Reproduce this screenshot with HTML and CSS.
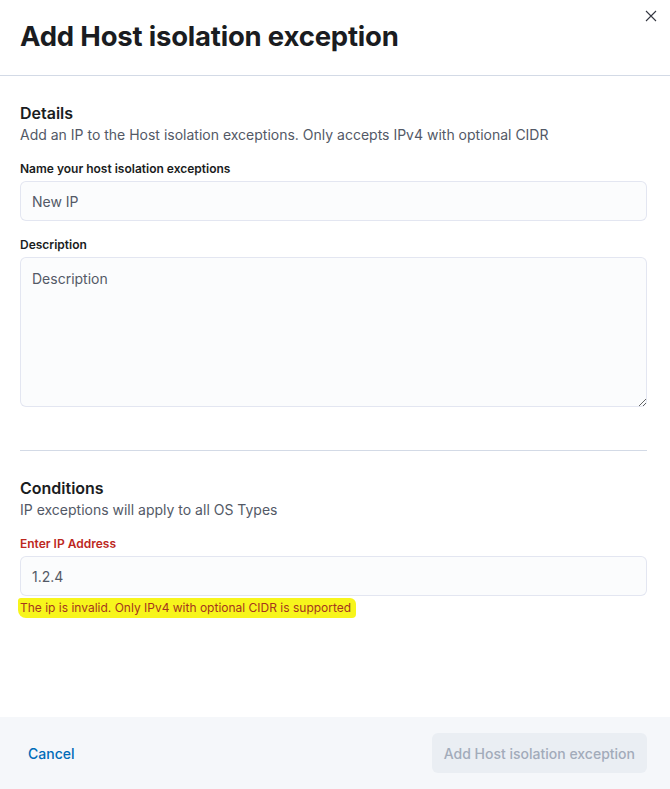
FILE: index.html
```html
<!DOCTYPE html>
<html>
<head>
<meta charset="utf-8">
<link rel="stylesheet" href="styles.css">
</head>
<body>
<div class="flyout">
  <button class="close" aria-label="Close">
    <svg width="12" height="12" viewBox="0 0 12 12"><path d="M1 1L11 11M11 1L1 11" stroke="#343741" stroke-width="1.1" fill="none"/></svg>
  </button>
  <header class="header">
    <h2 class="title">Add Host isolation exception</h2>
  </header>
  <main class="body">
    <section class="section">
      <h3 class="sec-title">Details</h3>
      <p class="sec-text">Add an IP to the Host isolation exceptions. Only accepts IPv4 with optional CIDR</p>
      <div class="field">
        <label class="label">Name your host isolation exceptions</label>
        <input class="input" type="text" value="New IP">
      </div>
      <div class="field">
        <label class="label">Description</label>
        <textarea class="textarea" placeholder="Description"></textarea>
      </div>
    </section>
    <hr class="rule">
    <section class="section">
      <h3 class="sec-title">Conditions</h3>
      <p class="sec-text">IP exceptions will apply to all OS Types</p>
      <div class="field">
        <label class="label label-err">Enter IP Address</label>
        <input class="input" type="text" value="1.2.4">
        <div class="error"><span class="hl">The ip is invalid. Only IPv4 with optional CIDR is supported</span></div>
      </div>
    </section>
  </main>
  <footer class="footer">
    <a class="cancel" href="#">Cancel</a>
    <button class="submit" disabled>Add Host isolation exception</button>
  </footer>
</div>
</body>
</html>
```
FILE: styles.css
```css
* { box-sizing: border-box; }
html, body { margin: 0; padding: 0; }
body {
  font-family: Inter, "Liberation Sans", sans-serif;
  color: #343741;
  background: #fff;
  width: 670px;
  height: 789px;
  overflow: hidden;
}
.flyout {
  position: relative;
  height: 789px;
  display: flex;
  flex-direction: column;
}
.close {
  position: absolute;
  top: 5px;
  right: 8px;
  width: 22px;
  height: 22px;
  border: 0;
  background: transparent;
  padding: 0;
  display: flex;
  align-items: center;
  justify-content: center;
}
.header {
  padding: 18px 23px 21px 20px;
  border-bottom: 1px solid #d3dae6;
}
.title {
  margin: 0;
  font-size: 27.5px;
  line-height: 36px;
  font-weight: 700;
  color: #1a1c21;
  letter-spacing: -0.2px;
}
.body {
  flex: 1;
  padding: 25px 23px 0 20px;
}
.sec-title {
  margin: 0;
  font-size: 16px;
  line-height: 24px;
  font-weight: 600;
  color: #1a1c21;
}
.sec-text {
  margin: 0 0 14px;
  font-size: 14px;
  line-height: 20px;
  color: #535966;
}
.field { margin-bottom: 14px; }
.label {
  display: block;
  font-size: 12px;
  line-height: 20px;
  font-weight: 600;
  color: #1a1c21;
  margin-bottom: 2px;
}
.label-err { color: #bd271e; }
.input, .textarea {
  display: block;
  width: 627px;
  border: 0;
  border-radius: 6px;
  background: #fbfcfd;
  box-shadow: inset 0 0 0 1px rgba(17, 43, 134, 0.1);
  font-family: Inter, "Liberation Sans", sans-serif;
  font-size: 14px;
  color: #535966;
  padding: 0 12px;
  outline: none;
}
.input { height: 40px; }
.textarea {
  height: 150px;
  padding: 12px;
  line-height: 20px;
  resize: vertical;
}
.textarea::placeholder { color: #535966; opacity: 1; }
.rule {
  border: 0;
  border-top: 1px solid #d3dae6;
  margin: 43px 0 25px;
  width: 627px;
}
.error {
  margin-top: 4px;
  font-size: 12px;
  line-height: 16px;
  color: #a5361e;
}
.hl {
  background: #f7f51c;
  padding: 2px 5px 3px 0;
  margin-left: -2px;
  padding-left: 2px;
  border-radius: 3px 6px 4px 8px;
}
.footer {
  height: 72px;
  background: #f5f7fa;
  display: flex;
  align-items: center;
  justify-content: space-between;
  padding: 0 23px 0 28px;
}
.cancel {
  font-size: 14px;
  color: #006bb8;
  text-decoration: none;
  font-weight: 500;
}
.submit {
  height: 40px;
  padding: 0 12px;
  border: 0;
  border-radius: 6px;
  background: #eaeef3;
  color: #a2abba;
  font-family: Inter, "Liberation Sans", sans-serif;
  font-size: 14px;
  font-weight: 500;
}
```
